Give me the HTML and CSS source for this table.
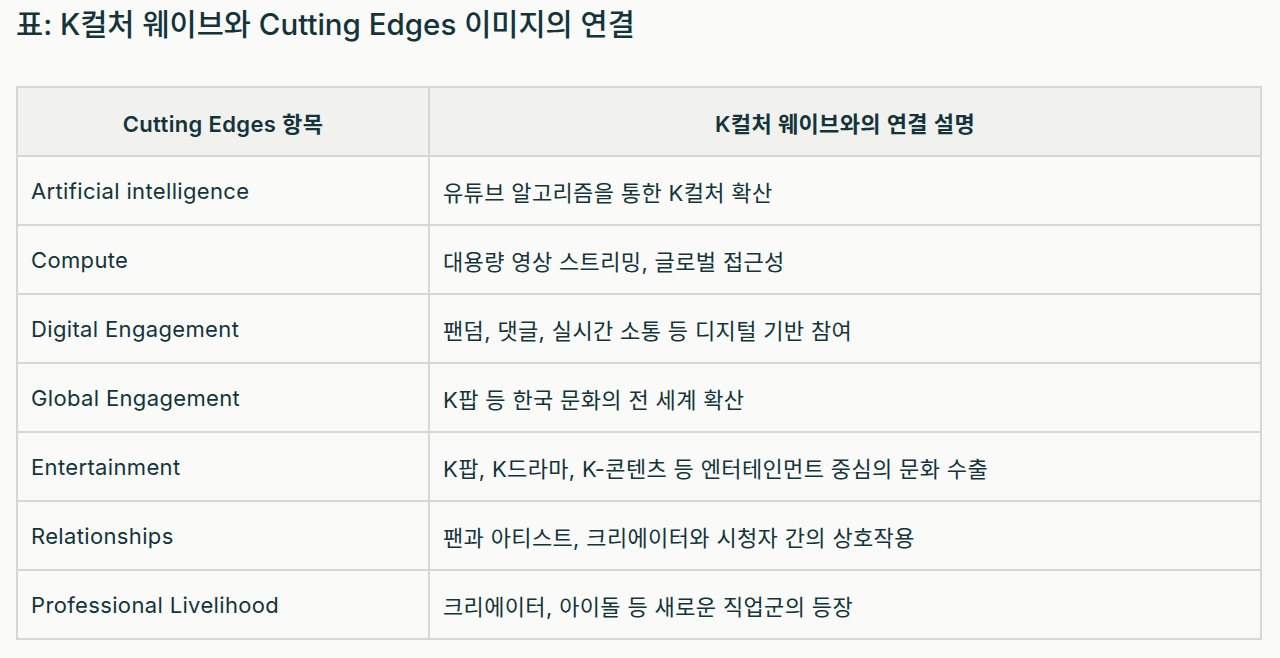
FILE: index.html
```html
<!DOCTYPE html>
<html lang="ko">
<head>
<meta charset="utf-8">
<link rel="stylesheet" href="styles.css">
</head>
<body>
<h1 class="title">표: K컬처 웨이브와 Cutting Edges 이미지의 연결</h1>
<table class="table">
  <thead>
    <tr><th class="col-a">Cutting Edges 항목</th><th>K컬처 웨이브와의 연결 설명</th></tr>
  </thead>
  <tbody>
    <tr><td>Artificial intelligence</td><td>유튜브 알고리즘을 통한 K컬처 확산</td></tr>
    <tr><td>Compute</td><td>대용량 영상 스트리밍, 글로벌 접근성</td></tr>
    <tr><td>Digital Engagement</td><td>팬덤, 댓글, 실시간 소통 등 디지털 기반 참여</td></tr>
    <tr><td>Global Engagement</td><td>K팝 등 한국 문화의 전 세계 확산</td></tr>
    <tr><td>Entertainment</td><td>K팝, K드라마, K-콘텐츠 등 엔터테인먼트 중심의 문화 수출</td></tr>
    <tr><td>Relationships</td><td>팬과 아티스트, 크리에이터와 시청자 간의 상호작용</td></tr>
    <tr><td>Professional Livelihood</td><td>크리에이터, 아이돌 등 새로운 직업군의 등장</td></tr>
  </tbody>
</table>
</body>
</html>
```
FILE: styles.css
```css
html, body {
  margin: 0;
  background: #fafaf8;
}
body {
  padding: 0 18px 0 16px;
  font-family: Inter, "Noto Sans CJK KR", sans-serif;
  color: #13343b;
}
.title {
  margin: 0;
  padding-top: 4px;
  height: 86px;
  box-sizing: border-box;
  font-size: 29.5px;
  font-weight: 500;
  line-height: 40px;
  letter-spacing: 0;
}
.table {
  width: 100%;
  border-collapse: collapse;
  border: 2px solid #d8d8d2;
  font-size: 22px;
  letter-spacing: 0.35px;
}
.table th, .table td {
  border: 2px solid #d8d8d2;
  height: 67px;
  padding: 0 13px;
  text-align: left;
  font-weight: 400;
}
.table th {
  background: #f1f1ee;
  text-align: center;
  font-weight: 600;
}
.col-a {
  width: 384px;
}
```
